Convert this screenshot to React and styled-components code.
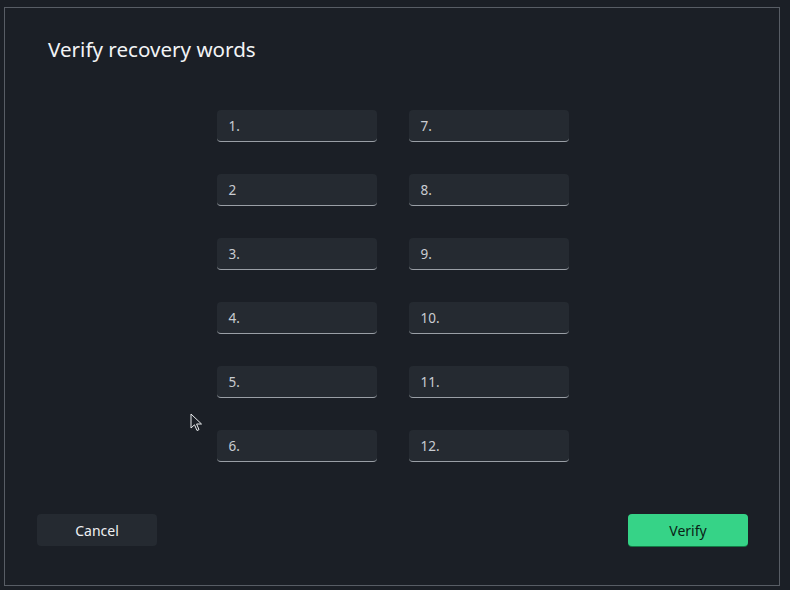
import React from "react";
import styled, { createGlobalStyle } from "styled-components";

const GlobalStyle = createGlobalStyle`
  html, body {
    margin: 0;
    padding: 0;
    background: #1b1f26;
    font-family: "Noto Sans", "Open Sans", sans-serif;
  }
`;

const Window = styled.div`
  position: relative;
  box-sizing: border-box;
  width: 776px;
  height: 579px;
  margin: 7px 0 0 4px;
  border: 1px solid #585d65;
  display: flex;
  flex-direction: column;
  padding: 27px 31px 39px 32px;
`;

const Title = styled.h1`
  margin: 0 0 0 11px;
  font-size: 20.6px;
  line-height: 28px;
  font-weight: 400;
  color: #f2f3f5;
`;

const WordsGrid = styled.div`
  margin: 47px auto 0;
  display: grid;
  grid-template-columns: repeat(2, 160px);
  grid-auto-flow: column;
  grid-template-rows: repeat(6, 32px);
  column-gap: 32px;
  row-gap: 32px;
`;

const WordField = styled.div`
  box-sizing: border-box;
  height: 32px;
  background: #252a31;
  border-radius: 4px;
  border-bottom: 1.5px solid #9a9fa6;
  display: flex;
  align-items: center;
  padding: 1px 12px 0;
  font-size: 13.5px;
  color: #c9ccd1;
`;

const Footer = styled.div`
  margin-top: auto;
  display: flex;
  justify-content: space-between;
`;

const Button = styled.button`
  width: 120px;
  height: 32px;
  border-radius: 4px;
  border: none;
  font-family: inherit;
  font-size: 14px;
  cursor: pointer;
  background: ${(p) => (p.$primary ? "#36d387" : "#252a31")};
  color: ${(p) => (p.$primary ? "#0a2216" : "#eef0f2")};
  box-shadow: ${(p) => (p.$primary ? "0 1px 0 #127a44" : "none")};
`;

const Pointer = styled.svg`
  position: absolute;
  left: 185px;
  top: 405px;
`;

const words = ["1.", "2", "3.", "4.", "5.", "6.", "7.", "8.", "9.", "10.", "11.", "12."];

export default function App() {
  return (
    <>
      <GlobalStyle />
      <Window>
        <Title>Verify recovery words</Title>
        <WordsGrid>
          {words.map((w) => (
            <WordField key={w}>{w}</WordField>
          ))}
        </WordsGrid>
        <Footer>
          <Button>Cancel</Button>
          <Button $primary>Verify</Button>
        </Footer>
        <Pointer width="14" height="20" viewBox="0 0 14 20">
          <path
            d="M1 1 L1 15 L4.5 11.8 L7 17.5 L9 16.6 L6.6 11 L11.5 11 Z"
            fill="#1b1f26"
            stroke="#e8eaec"
            strokeWidth="1"
            strokeLinejoin="round"
          />
        </Pointer>
      </Window>
    </>
  );
}
